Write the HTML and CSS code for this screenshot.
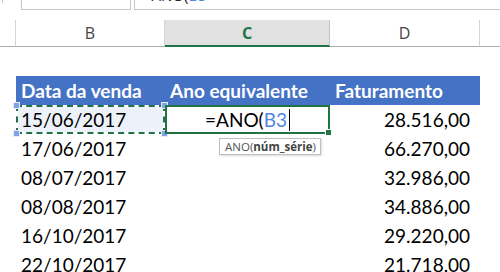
FILE: index.html
```html
<!DOCTYPE html>
<html lang="pt">
<head>
    <meta charset="UTF-8">
    <title>ANO - Excel</title>
    <link rel="stylesheet" href="styles.css">
</head>
<body>

<div class="formula-bar">
    <div class="tick"></div>
    <div class="name-box"></div>
    <div class="formula-box"><span class="formula-text">=ANO(<span class="ref">B3</span></span></div>
</div>

<div class="sheet">
    <!-- column headers -->
    <div class="corner"></div>
    <div class="col-head">B</div>
    <div class="col-head active">C</div>
    <div class="col-head">D</div>
    <div class="col-head last"></div>

    <!-- row 1 -->
    <div></div><div></div><div></div><div></div><div></div>

    <!-- row 2 : table header -->
    <div></div>
    <div class="cell th">Data da venda</div>
    <div class="cell th">Ano equivalente</div>
    <div class="cell th">Faturamento</div>
    <div></div>

    <!-- row 3 -->
    <div></div>
    <div class="cell copy">15/06/2017
        <span class="handle tl"></span><span class="handle tr"></span>
        <span class="handle bl"></span><span class="handle br"></span>
    </div>
    <div class="cell edit">
        <span>=ANO(<span class="ref">B3</span></span><span class="caret"></span>
        <span class="fill-handle"></span>
        <div class="tooltip">ANO(<b>núm_série</b>)</div>
    </div>
    <div class="cell num">28.516,00</div>
    <div></div>

    <div></div><div class="cell">17/06/2017</div><div></div><div class="cell num">66.270,00</div><div></div>
    <div></div><div class="cell">08/07/2017</div><div></div><div class="cell num">32.986,00</div><div></div>
    <div></div><div class="cell">08/08/2017</div><div></div><div class="cell num">34.886,00</div><div></div>
    <div></div><div class="cell">16/10/2017</div><div></div><div class="cell num">29.220,00</div><div></div>
    <div></div><div class="cell">22/10/2017</div><div></div><div class="cell num">21.718,00</div><div></div>
</div>

</body>
</html>
```

FILE: styles.css
```css
body {
    margin: 0;
    width: 500px;
    height: 272px;
    overflow: hidden;
    background: #fff;
    font-family: Lato, "Liberation Sans", sans-serif;
}

/* formula bar, only its bottom edge is on screen */
.formula-bar {
    display: flex;
    align-items: flex-start;
    height: 20px;
}
.tick {
    width: 1px;
    height: 3px;
    margin-left: 2px;
    background: #c8c8c8;
}
.name-box {
    width: 110px;
    height: 10px;
    margin-left: 18px;
    box-sizing: border-box;
    border: 1px solid #c6c6c6;
    border-top: none;
}
.formula-box {
    flex: 1;
    height: 10px;
    margin-left: 3px;
    box-sizing: border-box;
    border: 1px solid #c6c6c6;
    border-top: none;
    border-right: none;
    overflow: hidden;
}
.formula-text {
    display: block;
    margin: -15px 0 0 8px;
    font-family: "Open Sans", sans-serif;
    font-size: 15px;
    line-height: 20px;
    color: #222;
}

/* grid */
.sheet {
    display: grid;
    grid-template-columns: 16px 149px 165px 150px 1fr;
    grid-template-rows: 27px;
    grid-auto-rows: 29px;
}
.corner {
    border-right: 1px solid #d4d4d4;
    border-bottom: 1px solid #ababab;
}
.col-head {
    display: flex;
    align-items: center;
    justify-content: center;
    font-family: "Open Sans", sans-serif;
    font-size: 16px;
    color: #444;
    border-right: 1px solid #d4d4d4;
    border-bottom: 1px solid #ababab;
}
.col-head.active {
    background: #e1e1e1;
    color: #217346;
    font-weight: bold;
    border-bottom: 2px solid #217346;
    border-right-color: #c6c6c6;
}
.col-head.last {
    border-right: none;
}

.cell {
    display: flex;
    align-items: center;
    padding: 0 5px;
    font-size: 19px;
    color: #000;
    white-space: nowrap;
    position: relative;
}
.th {
    background: #4472c4;
    color: #fff;
    font-weight: bold;
}
.num {
    justify-content: flex-end;
    padding-right: 10px;
}

/* copied cell with marching ants */
.copy {
    border: 2px dashed #217346;
    padding-left: 3px;
    background: linear-gradient(#edf1fa, #edf1fa) padding-box, linear-gradient(#fff, #fff) border-box;
}
.handle {
    position: absolute;
    width: 5px;
    height: 5px;
    background: #7ea3e6;
    border: 1px solid #e6ecf8;
}
.handle.tl { left: -5px; top: -5px; }
.handle.tr { right: -5px; top: -5px; }
.handle.bl { left: -5px; bottom: -5px; }
.handle.br { right: -5px; bottom: -5px; }

/* cell being edited */
.edit {
    justify-content: center;
    border: 2px solid #217346;
}
.ref {
    color: #4f86e0;
}
.caret {
    width: 1px;
    height: 22px;
    margin-left: 2px;
    background: #000;
}
.fill-handle {
    position: absolute;
    right: -4px;
    bottom: -4px;
    width: 5px;
    height: 5px;
    background: #217346;
    border: 1px solid #fff;
}
.tooltip {
    position: absolute;
    left: 52px;
    top: 31px;
    height: 15px;
    padding: 0 4px 0 5px;
    background: #fff;
    border: 1px solid #bfbfbf;
    box-shadow: 1px 1px 2px rgba(0, 0, 0, 0.15);
    font-family: "Open Sans", sans-serif;
    font-size: 11.5px;
    line-height: 15px;
    color: #555;
}
.tooltip b {
    color: #444;
}
```
